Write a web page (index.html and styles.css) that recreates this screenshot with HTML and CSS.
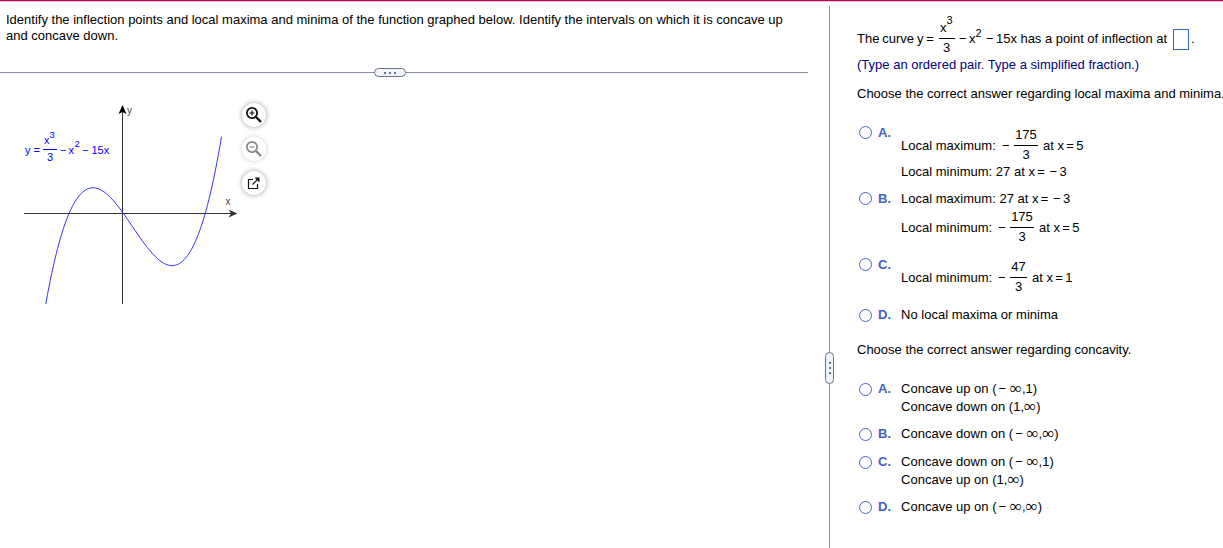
FILE: index.html
```html
<!DOCTYPE html>
<html lang="en">
<head>
<meta charset="utf-8">
<title>Inflection points and local extrema</title>
<link rel="stylesheet" href="styles.css">
</head>
<body>
<main class="page">
  <section class="problem">
    <p class="prompt">Identify the inflection points and local maxima and minima of the function graphed below. Identify the intervals on which it is concave up<br>and concave down.</p>
    <div class="divider"><span class="grip"><i></i><i></i><i></i></span></div>
    <div class="figure">
      <svg class="graph" width="240" height="215" viewBox="0 95 240 215">
        <path class="axis" d="M24 213.5H234M122.5 304V109"/>
        <path class="arrow-up" d="M122.500 105L118.500 114L122.500 112L126.500 114Z"/>
        <path class="arrow-right" d="M237.500 213.500L228.500 209.500L231 213.500L228.500 217.500Z"/>
        <path class="curve" d="M45.800 303.900C104.400 -25.400 162.900 487.300 221.500 136.800"/>
        <g class="axis-label"><text x="127" y="114">y</text><text x="225.500" y="205">x</text></g>
        <g class="equation">
          <text x="25" y="154">y</text><text x="33.500" y="154">=</text>
          <text x="44" y="144">x</text><text x="49.500" y="138" class="power">3</text>
          <path d="M43 149.500H57"/><text x="47" y="161">3</text>
          <text x="60" y="154">−</text><text x="68.500" y="154">x</text><text x="74.500" y="147" class="power">2</text>
          <text x="82" y="154">−</text><text x="91.500" y="154">15x</text>
        </g>
      </svg>
      <div class="tools">
        <span class="tool"><svg width="18" height="18" viewBox="0 0 18 18"><circle cx="7" cy="7" r="5.100"/><path d="M11 11L16 16" class="handle"/><path d="M4.500 7H9.500M7 4.500V9.500" class="sign"/></svg></span>
        <span class="tool off"><svg width="18" height="18" viewBox="0 0 18 18"><circle cx="7" cy="7" r="5.100"/><path d="M11 11L16 16" class="handle"/><path d="M4.500 7H9.500" class="sign"/></svg></span>
        <span class="tool"><svg width="18" height="18" viewBox="0 0 18 18"><path class="sign" d="M8 5.500H3.500V14.500H12.500V10M7.500 10.500L13 5"/><path class="tip" d="M9.500 3.500H14.500V8.500Z"/></svg></span>
      </div>
    </div>
  </section>
  <div class="splitter"><span class="grip upright"><i></i><i></i><i></i></span></div>
  <section class="answers">
    <div class="line curve-line"><span class="lead">The curve y =</span><span class="frac cubic"><span>x<sup>3</sup></span><span>3</span></span><span class="minus">−</span><span class="square">x<sup>2</sup></span><span class="minus two">−</span><span class="rest">15x has a point of inflection at</span><span class="blank"></span><span>.</span></div>
    <div class="line hint">(Type an ordered pair. Type a simplified fraction.)</div>
    <div class="line question">Choose the correct answer regarding local maxima and minima.</div>

    <div class="option a1"><span class="radio"></span><b>A.</b><div class="body">
      <div class="line mixed"><span class="label max">Local maximum:</span><span class="neg">−</span><span class="frac wide"><span>175</span><span>3</span></span><span class="eq">at <span class="tight">x = 5</span></span></div>
      <div class="line after">Local minimum: 27 at <span class="tight">x = &nbsp;− 3</span></div>
    </div></div>
    <div class="option b1"><span class="radio"></span><b>B.</b><div class="body">
      <div class="line">Local maximum: 27 at <span class="tight">x = &nbsp;− 3</span></div>
      <div class="line mixed second"><span class="label">Local minimum:</span><span class="neg">−</span><span class="frac wide"><span>175</span><span>3</span></span><span class="eq">at <span class="tight">x = 5</span></span></div>
    </div></div>
    <div class="option c1"><span class="radio"></span><b>C.</b><div class="body">
      <div class="line mixed"><span class="label">Local minimum:</span><span class="neg">−</span><span class="frac narrow"><span>47</span><span>3</span></span><span class="eq">at <span class="tight">x = 1</span></span></div>
    </div></div>
    <div class="option d1"><span class="radio"></span><b>D.</b><div class="body"><div class="line">No local maxima or minima</div></div></div>

    <div class="line question second-question">Choose the correct answer regarding concavity.</div>

    <div class="option a2"><span class="radio"></span><b>A.</b><div class="body roomy">
      <div class="line">Concave up on (<span class="m">−</span> <span class="inf">∞</span>,1)</div><div class="line">Concave down on (1,<span class="inf">∞</span>)</div></div></div>
    <div class="option b2"><span class="radio"></span><b>B.</b><div class="body"><div class="line">Concave down on (<span class="m">−</span> <span class="inf">∞</span>,<span class="inf">∞</span>)</div></div></div>
    <div class="option c2"><span class="radio"></span><b>C.</b><div class="body roomy">
      <div class="line">Concave down on (<span class="m">−</span> <span class="inf">∞</span>,1)</div><div class="line">Concave up on (1,<span class="inf">∞</span>)</div></div></div>
    <div class="option d2"><span class="radio"></span><b>D.</b><div class="body"><div class="line">Concave up on (<span class="m">−</span> <span class="inf">∞</span>,<span class="inf">∞</span>)</div></div></div>
  </section>
</main>
</body>
</html>
```
FILE: styles.css
```css
* { box-sizing: border-box; }
body {
  margin: 0;
  background: #fff;
  color: #000;
  font: 13px/16px "Liberation Sans", Arial, sans-serif;
  overflow: hidden;
}
p { margin: 0; }
.page {
  display: grid;
  grid-template-columns: 824px 11px 388px;
  height: 548px;
  border-top: 1px solid #b5044f;
  box-shadow: inset 0 1px #edbfd2;
}
.problem { padding-top: 11px; }
.prompt { padding-left: 6px; white-space: nowrap; }
.divider {
  display: flex;
  align-items: center;
  width: 808px;
  height: 9px;
  margin-top: 24px;
  padding-left: 374px;
  background: linear-gradient(#8790a5, #8790a5) 0 4px / 100% 1px no-repeat;
}
.grip {
  display: flex;
  justify-content: center;
  align-items: center;
  gap: 3px;
  flex: none;
  width: 32px;
  height: 9px;
  border: 1px solid #66758a;
  border-radius: 5px;
  background: #f2f5f9;
}
.grip i { width: 2px; height: 2px; background: #64748b; }
.figure { display: flex; padding-top: 18px; }
.graph { display: block; }
.axis { stroke: #333; fill: none; }
.arrow-up { fill: #000; }
.arrow-right { fill: #333; }
.curve { fill: none; stroke: #33f; stroke-width: 1; }
.axis-label { font-size: 10px; fill: #444; }
.equation { font-size: 11px; fill: #00f; stroke: none; }
.equation path { stroke: #00f; }
.power { font-size: 9.5px; }
.tools { display: flex; flex-direction: column; gap: 10px; padding: 8px 0 0 2px; }
.tool {
  display: grid;
  place-items: center;
  width: 24px;
  height: 24px;
  border-radius: 50%;
  background: #fff;
  box-shadow: 0 0 5px #999;
}
.tool svg { fill: none; stroke: #111; stroke-width: 1.8; }
.tool .handle { stroke-width: 2.4; }
.tool .sign { stroke-width: 1.2; }
.tool .tip { fill: #111; stroke: none; }
.tool.off svg { stroke: #888; }
.tool.off { box-shadow: 0 0 5px #ccc; }
.splitter {
  display: flex;
  padding-top: 346px;
  margin-top: 5px;
  background: linear-gradient(#8790a5, #8790a5) 5px 0 / 1px 100% no-repeat;
}
.grip.upright { flex-direction: column; width: 9px; height: 32px; margin-left: 1px; }

.answers { padding-left: 22px; overflow: hidden; }
.line { white-space: nowrap; height: 16px; letter-spacing: 0.01px; }
.curve-line { display: flex; align-items: center; margin-top: 30px; }
.lead { width: 82px; word-spacing: -0.8px; }
.frac {
  display: flex;
  flex-direction: column;
  align-items: center;
  flex: none;
  height: 38px;
  line-height: 16px;
  background: linear-gradient(#000, #000) 0 18px / 100% 1px no-repeat;
}
.frac > span { height: 19px; }
.frac > span:last-child { padding-top: 1px; }
.frac.cubic { width: 16px; }
.frac.cubic > span { align-self: flex-start; padding-left: 4px; }
.frac.cubic > span:first-child { padding-left: 1px; }
sup { position: relative; top: -8px; font-size: 11px; line-height: 0; vertical-align: baseline; }
.minus { padding-left: 4px; width: 14px; }
.square { width: 13px; }
.square sup { top: -6px; }
.two { width: 14px; }
.rest { width: 177px; letter-spacing: -0.03px; }
.blank { flex: none; width: 16px; height: 21px; margin-right: 2px; border: 1px solid #3366d0; }
.hint { margin-top: 10px; color: #00007f; }
.question { margin-top: 13px; letter-spacing: 0; }
.option { display: flex; margin-top: 11px; }
.radio { flex: none; width: 13px; height: 13px; margin: 2px 0 0 2px; border: 1px solid #4a63c8; border-radius: 50%; }
.a1 .radio, .b1 .radio, .c1 .radio { margin-top: 1px; }
.option b { flex: none; width: 23px; margin-left: 6px; color: #4460cc; }
.mixed { display: flex; align-items: center; }
.label { width: 97px; }
.label.max { width: 101px; }
.neg { width: 12px; }
.wide { width: 24px; }
.narrow { width: 17px; }
.eq { padding-left: 5px; }
.tight { word-spacing: -1.3px; }
.a1 { margin-top: 23px; }
.a1 .body { padding-top: 13px; }
.after { margin-top: 10px; }
.second { margin-top: 13px; }
.c1 { margin-top: 21px; }
.c1 .body { padding-top: 13px; }
.d1 { margin-top: 21px; }
.second-question { margin-top: 19px; }
.a2 { margin-top: 23px; }
.roomy { display: grid; gap: 2px; }
.c2 { margin-top: 12px; }
.m { margin-left: 2px; }
.inf { position: relative; top: 1px; font-family: "Liberation Serif", serif; font-size: 17px; line-height: 0; }
```
